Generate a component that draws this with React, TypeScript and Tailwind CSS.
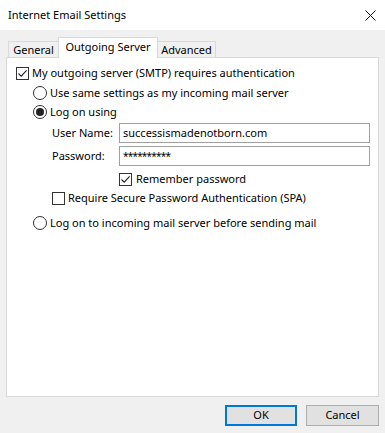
import React from "react";

const font = { fontFamily: '"Noto Sans", "Liberation Sans", sans-serif' };

function Check({ checked }: { checked?: boolean }) {
  return (
    <div className="w-[13px] h-[13px] border border-[#333] bg-white flex items-center justify-center shrink-0">
      {checked && (
        <svg width="11" height="11" viewBox="0 0 11 11">
          <path d="M1.5 5.5 L4.2 8.2 L9.6 2.4" fill="none" stroke="#222" strokeWidth="1.1" />
        </svg>
      )}
    </div>
  );
}

function Radio({ checked }: { checked?: boolean }) {
  return (
    <div className="w-[14px] h-[14px] rounded-full border border-[#333] bg-white flex items-center justify-center shrink-0">
      {checked && <div className="w-[8px] h-[8px] rounded-full bg-[#222]"></div>}
    </div>
  );
}

export default function App() {
  return (
    <div className="w-[385px] h-[433px] bg-[#f0f0f0] flex flex-col text-[11px] text-black" style={font}>
      {/* Title bar */}
      <div className="h-[30px] bg-white flex items-center justify-between pl-[8px] pr-[8px] shrink-0">
        <span className="text-[11px]">Internet Email Settings</span>
        <svg width="11" height="11" viewBox="0 0 11 11" className="mr-[1px]">
          <path d="M0.5 0.5 L10.5 10.5 M10.5 0.5 L0.5 10.5" stroke="#111" strokeWidth="1" />
        </svg>
      </div>

      {/* Tabs */}
      <div className="pt-[7px] px-[6px]">
        <div className="flex items-end h-[21px] pl-[2px] mb-[-1px] relative z-10">
          <div className="w-[50px] h-[17px] border border-r-0 border-[#d9d9d9] bg-[#f0f0f0] flex items-center justify-center pt-[1px]">
            General
          </div>
          <div className="w-[100px] h-[21px] border border-b-0 border-[#d9d9d9] bg-white flex items-start justify-center pt-[1px]">
            Outgoing Server
          </div>
          <div className="w-[58px] h-[17px] border border-l-0 border-[#d9d9d9] bg-[#f0f0f0] flex items-center justify-center pt-[1px]">
            Advanced
          </div>
        </div>

        {/* Panel */}
        <div className="h-[340px] border border-[#d9d9d9] bg-white pt-[5px] pl-[9px]">
          <div className="h-[20px] flex items-center gap-[3px]">
            <Check checked />
            <span>My outgoing server (SMTP) requires authentication</span>
          </div>
          <div className="h-[20px] flex items-center gap-[3px] pl-[17px]">
            <Radio />
            <span>Use same settings as my incoming mail server</span>
          </div>
          <div className="h-[20px] flex items-center gap-[3px] pl-[17px] mt-[-1px]">
            <Radio checked />
            <span>Log on using</span>
          </div>
          <div className="h-[20px] flex items-center pl-[36px] mt-[1px]">
            <span className="w-[67px]">User Name:</span>
            <div className="w-[251px] h-[20px] border border-[#a0a0a0] flex items-center pl-[3px]">
              successismadenotborn.com
            </div>
          </div>
          <div className="h-[20px] flex items-center pl-[36px] mt-[3px]">
            <span className="w-[67px]">Password:</span>
            <div className="w-[251px] h-[20px] border border-[#a0a0a0] flex items-start pt-[2px] pl-[3px] text-[10px] tracking-[-0.8px]">
              **********
            </div>
          </div>
          <div className="h-[20px] flex items-center gap-[4px] pl-[103px] mt-[3px]">
            <Check checked />
            <span>Remember password</span>
          </div>
          <div className="h-[20px] flex items-center gap-[3px] pl-[36px] mt-[-1px]">
            <Check />
            <span>Require Secure Password Authentication (SPA)</span>
          </div>
          <div className="h-[20px] flex items-center gap-[3px] pl-[17px] mt-[5px]">
            <Radio />
            <span>Log on to incoming mail server before sending mail</span>
          </div>
        </div>
      </div>

      {/* Buttons */}
      <div className="flex justify-end gap-[9px] pr-[6px] mt-[8px]">
        <button className="w-[72px] h-[21px] border-2 border-[#0078d7] bg-[#e1e1e1] flex items-center justify-center">
          OK
        </button>
        <button className="w-[73px] h-[21px] border border-[#adadad] bg-[#e1e1e1] flex items-center justify-center">
          Cancel
        </button>
      </div>
    </div>
  );
}
